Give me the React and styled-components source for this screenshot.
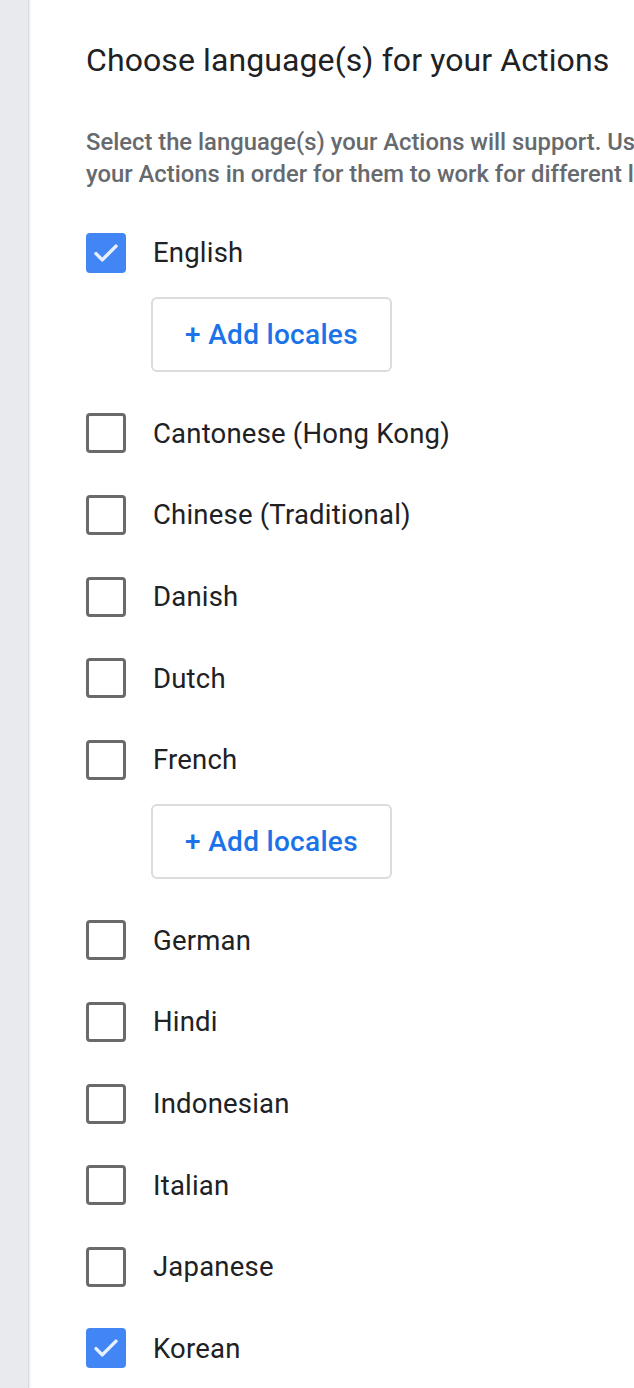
import React from 'react'
import styled, { createGlobalStyle } from 'styled-components'

const languages = [
  { name: 'English', checked: true, locales: true },
  { name: 'Cantonese (Hong Kong)' },
  { name: 'Chinese (Traditional)' },
  { name: 'Danish' },
  { name: 'Dutch' },
  { name: 'French', locales: true },
  { name: 'German' },
  { name: 'Hindi' },
  { name: 'Indonesian' },
  { name: 'Italian' },
  { name: 'Japanese' },
  { name: 'Korean', checked: true },
]

const GlobalStyle = createGlobalStyle`
  html, body {
    margin: 0;
    padding: 0;
    background: #fff;
    overflow: hidden;
  }
  body {
    font-family: Roboto, "Noto Sans", Arial, sans-serif;
  }
`

const Page = styled.div`
  display: flex;
  width: 634px;
  height: 1388px;
  overflow: hidden;
`

const Rail = styled.div`
  flex: 0 0 28px;
  background: #e8eaed;
  border-right: 1px solid #d7d9dc;
  box-shadow: 1px 0 2px rgba(60, 64, 67, 0.12);
`

const Main = styled.div`
  flex: 1;
  padding: 40px 0 0 57px;
  min-width: 0;
  overflow: hidden;
`

const Title = styled.h1`
  margin: 0;
  font-size: 32px;
  line-height: 40px;
  font-weight: 400;
  color: #202124;
  letter-spacing: 0.1px;
  white-space: nowrap;
`

const Description = styled.div`
  margin-top: 46px;
  font-size: 23.8px;
  line-height: 32px;
  font-weight: 500;
  color: #666a6e;
  white-space: nowrap;
`

const List = styled.div`
  margin-top: 22px;
  display: flex;
  flex-direction: column;
`

const Row = styled.label`
  display: flex;
  align-items: center;
  height: 81.6px;
  gap: 27px;
`

const Box = styled.span`
  flex: 0 0 auto;
  box-sizing: border-box;
  width: 40px;
  height: 40px;
  border-radius: 4px;
  display: flex;
  align-items: center;
  justify-content: center;
  background: ${p => (p.$checked ? '#4285f4' : '#fff')};
  border: ${p => (p.$checked ? 'none' : '3px solid #6a6a6a')};
`

const Label = styled.span`
  font-size: 27.5px;
  color: #202124;
  letter-spacing: 0.2px;
`

const LocaleWrap = styled.div`
  padding: 3.5px 0 20.5px 65px;
`

const LocaleButton = styled.button`
  box-sizing: border-box;
  width: 241px;
  height: 75px;
  border: 2px solid #dadce0;
  border-radius: 6px;
  background: #fff;
  color: #1a73e8;
  font-family: Roboto, "Noto Sans", Arial, sans-serif;
  font-size: 28px;
  font-weight: 500;
  letter-spacing: 0.3px;
  cursor: pointer;
`

const Check = () => (
  <svg width="30" height="30" viewBox="0 0 24 24">
    <path d="M4 12.5l5 5L20 6.5" fill="none" stroke="#e8f0fe" strokeWidth="2.8" strokeLinecap="round" strokeLinejoin="round" />
  </svg>
)

export default function App() {
  return (
    <Page>
      <GlobalStyle />
      <Rail />
      <Main>
        <Title>Choose language(s) for your Actions</Title>
        <Description>
          <div>Select the language(s) your Actions will support. Users must speak one of these languages to use</div>
          <div>your Actions in order for them to work for different locales and regions around the world.</div>
        </Description>
        <List>
          {languages.map(lang => (
            <React.Fragment key={lang.name}>
              <Row>
                <Box $checked={lang.checked}>{lang.checked && <Check />}</Box>
                <Label>{lang.name}</Label>
              </Row>
              {lang.locales && (
                <LocaleWrap>
                  <LocaleButton>+ Add locales</LocaleButton>
                </LocaleWrap>
              )}
            </React.Fragment>
          ))}
        </List>
      </Main>
    </Page>
  )
}
